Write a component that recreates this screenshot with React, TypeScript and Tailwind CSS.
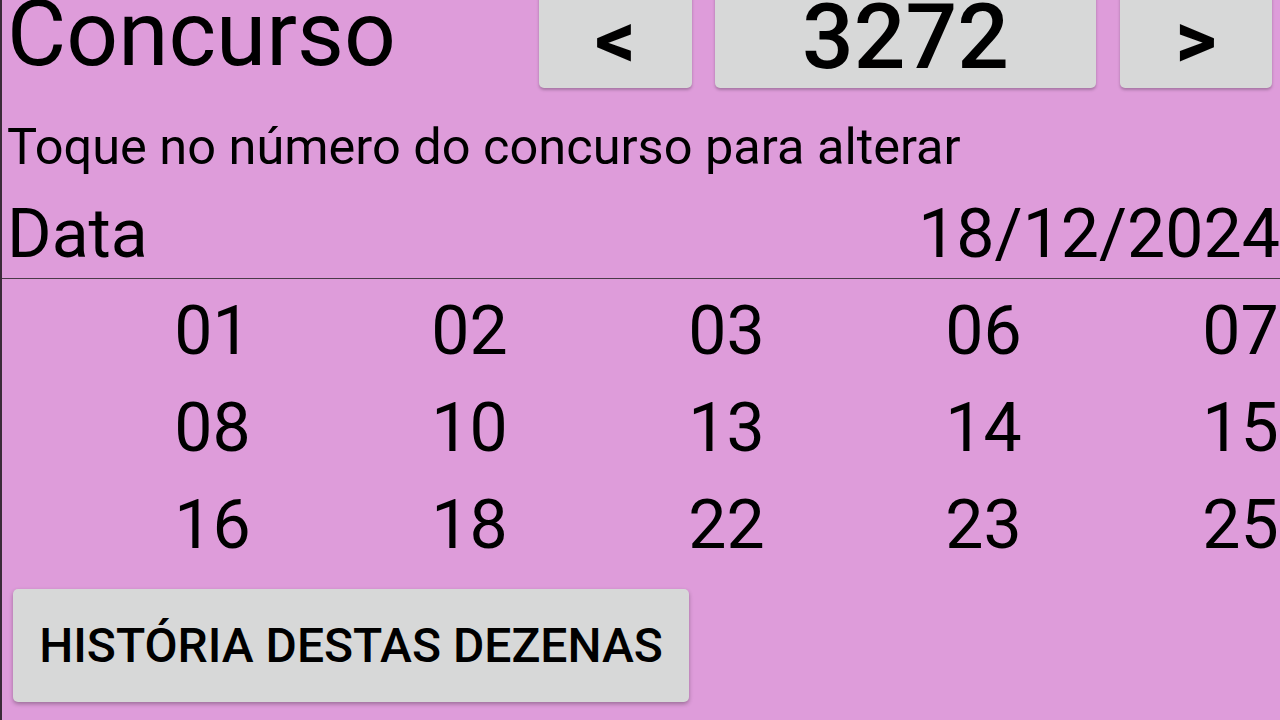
import React from "react";

const numbers = ["01", "02", "03", "06", "07", "08", "10", "13", "14", "15", "16", "18", "22", "23", "25"];

function NavButton({ children, className }: { children: React.ReactNode; className: string }) {
  return (
    <div
      className={`flex items-center justify-center rounded-[5px] bg-[#d7d8d8] shadow-[0_2px_3px_rgba(0,0,0,0.25)] -mt-[10px] h-[98px] ${className}`}
    >
      {children}
    </div>
  );
}

export default function App() {
  return (
    <div
      className="relative w-[1280px] h-[720px] overflow-hidden bg-[#de9cda] text-black border-l-2 border-[#3a2a38]"
      style={{ fontFamily: "Roboto, 'Noto Sans', sans-serif" }}
    >
      {/* header: title and contest selector */}
      <div className="flex h-[88px]">
        <div className="pl-[5px] text-[91px] leading-[88px] -mt-[10px] w-[537px] whitespace-nowrap">Concurso</div>
        <NavButton className="w-[153px] text-[80px] font-bold leading-none pt-[2px]">&lt;</NavButton>
        <NavButton className="ml-[23px] w-[381px] text-[91px] font-medium leading-none pb-[4px]">3272</NavButton>
        <NavButton className="ml-[24px] w-[152px] text-[80px] font-bold leading-none pt-[2px]">&gt;</NavButton>
      </div>

      <div className="pl-[5px] mt-[29px] text-[50.5px] leading-[60px] whitespace-nowrap">
        Toque no número do concurso para alterar
      </div>

      <div className="flex justify-between items-end w-[1278px] pl-[5px] mt-[21px] h-[72px] text-[68px] leading-[72px] whitespace-nowrap">
        <span>Data</span>
        <span>18/12/2024</span>
      </div>

      <div className="mt-[8px] h-px w-full bg-[#4a3a48]" />

      {/* drawn numbers */}
      <div className="grid grid-cols-[repeat(5,257px)] pl-[82px] mt-[4px] w-[1400px]">
        {numbers.map((n) => (
          <div key={n} className="text-center text-[68px] leading-[97px] h-[97px]">
            {n}
          </div>
        ))}
      </div>

      <div className="ml-[11px] mt-[15px] flex h-[113px] w-[676px] items-center justify-center rounded-[5px] bg-[#d7d8d8] shadow-[0_2px_4px_rgba(0,0,0,0.3)] text-[48px] font-medium">
        HISTÓRIA DESTAS DEZENAS
      </div>
    </div>
  );
}
